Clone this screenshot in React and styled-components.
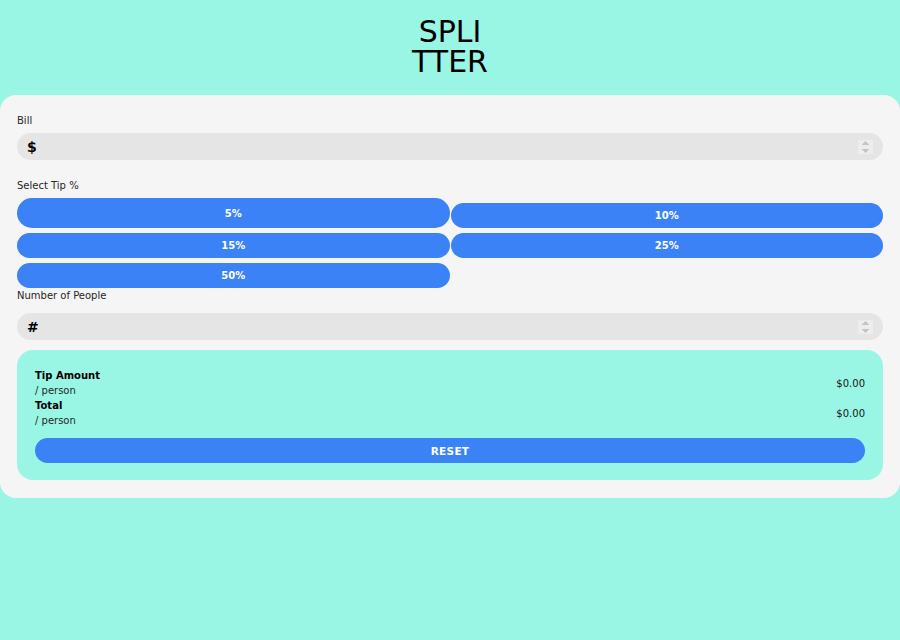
import React from 'react'
import styled, { createGlobalStyle } from 'styled-components'

const Global = createGlobalStyle`
  * { box-sizing: border-box; }
  body {
    margin: 0;
    background: #99f6e4;
    font-family: "DejaVu Sans", sans-serif;
    color: #171717;
  }
`

const Page = styled.div`
  display: flex;
  flex-direction: column;
  align-items: center;
`

const Title = styled.h1`
  width: 78px;
  margin: 17px 0 18px;
  font-size: 30px;
  line-height: 30px;
  font-weight: 400;
  text-align: center;
  word-break: break-all;
  color: #000;
`

const Card = styled.div`
  width: 100%;
  background: #f5f5f5;
  border-radius: 16px;
  padding: 20px 17px 18px;
  display: flex;
  flex-direction: column;
`

const Label = styled.label`
  font-size: 10px;
  line-height: 12px;
  color: #262626;
  margin-top: ${(props) => props.top || '0px'};
  margin-bottom: ${(props) => props.bottom || '0px'};
`

const InputWrap = styled.div`
  display: flex;
  align-items: center;
  height: 27px;
  background: #e5e5e5;
  border-radius: 999px;
  padding: 0 8px 0 10px;
  gap: 4px;
`

const Sign = styled.span`
  font-size: 14px;
  font-weight: 700;
  color: #000;
`

const Field = styled.input`
  flex: 1;
  min-width: 0;
  height: 100%;
  border: none;
  outline: none;
  background: transparent;
  font-family: inherit;
  font-size: 12px;

  &::-webkit-inner-spin-button {
    opacity: 0.35;
  }
`

const TipGrid = styled.div`
  display: grid;
  grid-template-columns: 1fr 1fr;
  column-gap: 1px;
  row-gap: 5px;
  align-items: end;
  margin-top: 6px;
`

const TipButton = styled.button`
  height: ${(props) => (props.tall ? '30px' : '25px')};
  border: none;
  border-radius: 999px;
  background: #3b82f6;
  color: #fff;
  font-family: inherit;
  font-size: 10px;
  font-weight: 700;
  cursor: pointer;
`

const Results = styled.div`
  margin-top: 10px;
  background: #99f6e4;
  border-radius: 16px;
  padding: 18px 18px 17px 18px;
  display: flex;
  flex-direction: column;
`

const Row = styled.div`
  display: flex;
  justify-content: space-between;
  align-items: center;
`

const RowLabel = styled.div`
  display: flex;
  flex-direction: column;
  font-size: 10px;
  line-height: 15px;
`

const Strong = styled.span`
  font-weight: 700;
  color: #000;
`

const Sub = styled.span`
  color: #262626;
`

const Amount = styled.span`
  font-size: 10px;
  color: #171717;
`

const Reset = styled.button`
  margin-top: 10px;
  height: 25px;
  border: none;
  border-radius: 999px;
  background: #3b82f6;
  color: #fff;
  font-family: inherit;
  font-size: 10.5px;
  font-weight: 700;
  letter-spacing: 0.3px;
  cursor: pointer;
`

const tips = ['5%', '10%', '15%', '25%', '50%']

export default function App() {
  return (
    <Page>
      <Global />
      <Title>SPLITTER</Title>
      <Card>
        <Label bottom="6px">Bill</Label>
        <InputWrap>
          <Sign>$</Sign>
          <Field type="number" />
        </InputWrap>
        <Label top="20px">Select Tip %</Label>
        <TipGrid>
          {tips.map((t, i) => (
            <TipButton key={t} tall={i === 0}>{t}</TipButton>
          ))}
        </TipGrid>
        <Label top="2px" bottom="11px">Number of People</Label>
        <InputWrap>
          <Sign>#</Sign>
          <Field type="number" />
        </InputWrap>
        <Results>
          <Row>
            <RowLabel>
              <Strong>Tip Amount</Strong>
              <Sub>/ person</Sub>
            </RowLabel>
            <Amount>$0.00</Amount>
          </Row>
          <Row>
            <RowLabel>
              <Strong>Total</Strong>
              <Sub>/ person</Sub>
            </RowLabel>
            <Amount>$0.00</Amount>
          </Row>
          <Reset>RESET</Reset>
        </Results>
      </Card>
    </Page>
  )
}
